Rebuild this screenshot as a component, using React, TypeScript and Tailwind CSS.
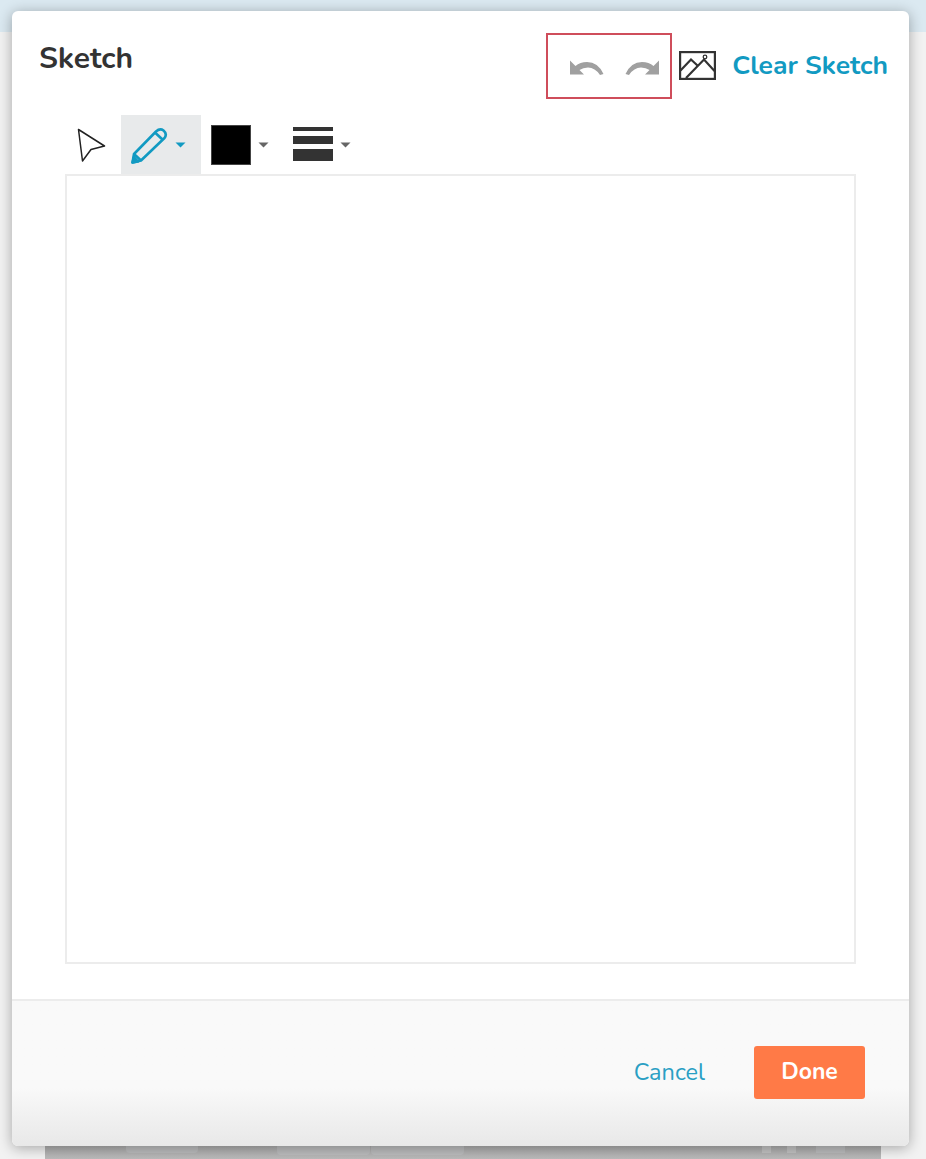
import React from 'react';

const font = "font-['Nunito','Noto_Sans','Open_Sans',sans-serif]";

const Caret = ({ color }: { color: string }) => (
  <svg width="11" height="6" viewBox="0 0 11 6" className="shrink-0">
    <path d="M0.5 0.5h10L5.5 5.5z" fill={color} />
  </svg>
);

const ArrowIcon = () => (
  <svg width="30" height="35" viewBox="0 0 30 35" fill="none">
    <path d="M1.5 1.5 L27.5 18 L14 21.5 L5.5 33 Z" stroke="#222" strokeWidth="1.5" strokeLinejoin="round" />
  </svg>
);

const PencilIcon = () => (
  <svg width="37" height="37" viewBox="0 0 37 37" fill="none" stroke="#129ac2" strokeWidth="2.6" strokeLinejoin="round">
    <path d="M3 27 L25 4.5 Q29 1 32.5 3.5 Q36.5 7 33.5 11 L10 33.5 L1.5 35.5 Z" />
    <path d="M24.5 6 L32 13" />
    <path d="M3 27 L10 33.5" />
    <path d="M1.5 35.5 L3 30 L7 34.5 Z" fill="#129ac2" />
  </svg>
);

const UndoIcon = ({ flip }: { flip?: boolean }) => (
  <svg width="34" height="16" viewBox="0 0 34 16" className={flip ? '-scale-x-100' : ''}>
    <path d="M0 0.5 V14.5 H14 L9.5 10 Q13 7.5 18 7.5 Q25 7.5 30 15 L33.5 14 Q28 2 17 2 Q10 2 5.5 6 Z" fill="#a0a0a0" />
  </svg>
);

const ImageIcon = () => (
  <svg width="37" height="29" viewBox="0 0 37 29" fill="none" stroke="#333" strokeWidth="2.2">
    <rect x="1.1" y="1.1" width="34.8" height="26.8" />
    <path d="M1.5 19.5 L12 8.5 L19 15" />
    <path d="M7 27 L25 8.5 L35.5 20" />
    <circle cx="26" cy="6" r="1.8" strokeWidth="1.3" />
  </svg>
);

const StrokeIcon = () => (
  <div className="flex h-[34px] w-10 flex-col justify-between">
    <div className="h-1 bg-[#333333]" />
    <div className="h-2 bg-[#333333]" />
    <div className="h-3 bg-[#333333]" />
  </div>
);

export default function App() {
  return (
    <div className={`${font} relative flex h-[1159px] w-[926px] flex-col justify-between overflow-hidden bg-[#f2f2f2]`}>
      {/* dimmed page behind the modal */}
      <div className="h-8 bg-[#dbe9f1]" />
      <div className="mx-[45px] flex h-[14px] items-start bg-gradient-to-b from-[#adadad] to-[#bababa]">
        <div className="ml-[81px] h-[8px] w-[72px] rounded-b-sm bg-[#bcbdbe]" />
        <div className="ml-[79px] h-[10px] w-[93px] rounded-b-sm bg-[#bcbdbe]" />
        <div className="ml-[1px] h-[10px] w-[93px] rounded-b-sm bg-[#bcbdbe]" />
        <div className="ml-[298px] h-[8px] w-[9px] bg-[#c4c4c4]" />
        <div className="ml-[16px] h-[8px] w-[9px] bg-[#c4c4c4]" />
        <div className="ml-[20px] h-[8px] w-[29px] bg-[#bcbdbe]" />
      </div>

      {/* modal */}
      <div className="absolute left-3 top-[11px] flex h-[1135px] w-[897px] flex-col overflow-hidden rounded-md bg-white shadow-[0_2px_14px_rgba(0,0,0,0.32)]">
        <div className="flex h-[104px] shrink-0 items-start justify-between pl-[27px] pr-[21px]">
          <h1 className="mt-[28px] text-[30px] font-bold leading-10 text-[#333333]">Sketch</h1>
          <div className="mt-[22px] flex items-center">
            <div className="flex h-[66px] w-[126px] items-center justify-end gap-[21px] border-2 border-[#cf4d5b] pr-[11px] pt-[3px]">
              <UndoIcon />
              <UndoIcon flip />
            </div>
            <div className="ml-[7px] mt-[-2px]">
              <ImageIcon />
            </div>
            <span className="ml-[16px] mt-[-2px] text-[26.5px] font-bold leading-9 text-[#129ac2]">Clear Sketch</span>
          </div>
        </div>

        <div className="flex h-[60px] shrink-0 items-center pl-[65px]">
          <ArrowIcon />
          <div className="ml-[14px] flex h-full w-20 items-center gap-[7px] bg-[#e8eaeb] pl-[10px]">
            <PencilIcon />
            <Caret color="#129ac2" />
          </div>
          <div className="ml-[10px] h-10 w-10 border border-[#444] bg-black" />
          <div className="ml-[7px]">
            <Caret color="#666666" />
          </div>
          <div className="ml-[24px] mt-[-2px]">
            <StrokeIcon />
          </div>
          <div className="ml-[7px]">
            <Caret color="#666666" />
          </div>
        </div>

        <div className="ml-[53px] mt-[-1px] h-[790px] w-[791px] shrink-0 border-2 border-[#ececec] bg-white" />

        <div className="mt-[35px] flex flex-1 items-center justify-end gap-[49px] border-t-2 border-[#ececec] bg-gradient-to-b from-[#f9f9f9] from-60% to-[#e8e8e8] pb-[3px] pr-[44px]">
          <span className="mt-[2px] text-[23.5px] text-[#2a9fc4]">Cancel</span>
          <button className="h-[53px] w-[111px] rounded-[3px] bg-[#ff7a47] pt-[1px] text-[23px] font-bold text-white">Done</button>
        </div>
      </div>
    </div>
  );
}
